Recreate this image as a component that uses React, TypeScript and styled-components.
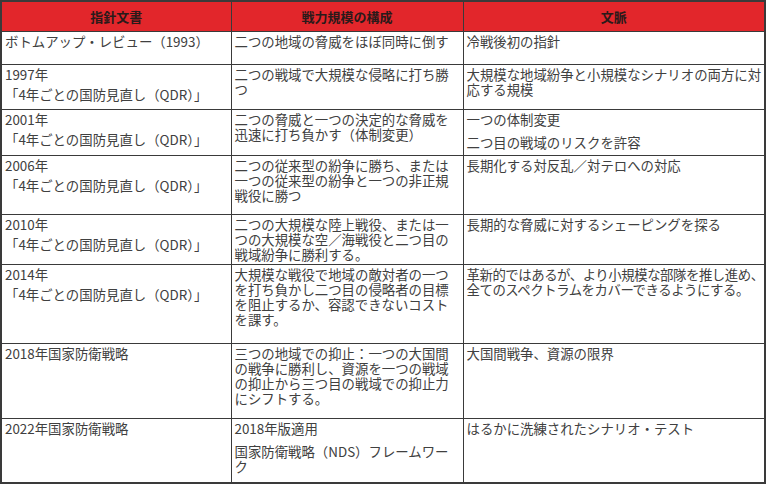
import styled, { createGlobalStyle } from 'styled-components'

interface Row {
  doc: string[]
  force: string[]
  context: string[]
  height: number
  tight?: boolean
}

// line breaks follow the source table
const rows: Row[] = [
  {
    doc: ['ボトムアップ・レビュー（1993）'],
    force: ['二つの地域の脅威をほぼ同時に倒す'],
    context: ['冷戦後初の指針'],
    height: 33,
  },
  {
    doc: ['1997年', '「4年ごとの国防見直し（QDR）」'],
    force: ['二つの戦域で大規模な侵略に打ち勝\nつ'],
    context: ['大規模な地域紛争と小規模なシナリオの両方に対\n応する規模'],
    height: 45,
  },
  {
    doc: ['2001年', '「4年ごとの国防見直し（QDR）」'],
    force: ['二つの脅威と一つの決定的な脅威を\n迅速に打ち負かす（体制変更）'],
    context: ['一つの体制変更', '二つ目の戦域のリスクを許容'],
    height: 46,
  },
  {
    doc: ['2006年', '「4年ごとの国防見直し（QDR）」'],
    force: ['二つの従来型の紛争に勝ち、または\n一つの従来型の紛争と一つの非正規\n戦役に勝つ'],
    context: ['長期化する対反乱／対テロへの対応'],
    height: 59,
  },
  {
    doc: ['2010年', '「4年ごとの国防見直し（QDR）」'],
    force: ['二つの大規模な陸上戦役、または一\nつの大規模な空／海戦役と二つ目の\n戦域紛争に勝利する。'],
    context: ['長期的な脅威に対するシェーピングを探る'],
    height: 49,
  },
  {
    doc: ['2014年', '「4年ごとの国防見直し（QDR）」'],
    force: ['大規模な戦役で地域の敵対者の一つ\nを打ち負かし二つ目の侵略者の目標\nを阻止するか、容認できないコスト\nを課す。'],
    context: ['革新的ではあるが、より小規模な部隊を推し進め、\n全てのスペクトラムをカバーできるようにする。'],
    height: 79,
    tight: true,
  },
  {
    doc: ['2018年国家防衛戦略'],
    force: ['三つの地域での抑止：一つの大国間\nの戦争に勝利し、資源を一つの戦域\nの抑止から三つ目の戦域での抑止力\nにシフトする。'],
    context: ['大国間戦争、資源の限界'],
    height: 75,
  },
  {
    doc: ['2022年国家防衛戦略'],
    force: ['2018年版適用', '国家防衛戦略（NDS）フレームワー\nク'],
    context: ['はるかに洗練されたシナリオ・テスト'],
    height: 64,
  },
]

const GlobalStyle = createGlobalStyle`
  html, body {
    margin: 0;
    padding: 0;
    background: #ffffff;
  }
  body {
    font-family: "Noto Sans CJK JP", "Noto Sans", sans-serif;
  }
`

export default function App() {
  return (
    <>
      <GlobalStyle />
      <Table>
        <colgroup>
          <col style={{ width: 230 }} />
          <col style={{ width: 232 }} />
          <col />
        </colgroup>
        <thead>
          <tr>
            <HeadCell>指針文書</HeadCell>
            <HeadCell>戦力規模の構成</HeadCell>
            <HeadCell>文脈</HeadCell>
          </tr>
        </thead>
        <tbody>
          {rows.map((row, i) => (
            <BodyRow key={i} $height={row.height}>
              <Cell $gap={5}>
                {row.doc.map((t, j) => (
                  <Para key={j}>{t}</Para>
                ))}
              </Cell>
              <Cell $gap={8}>
                {row.force.map((t, j) => (
                  <Para key={j}>{t}</Para>
                ))}
              </Cell>
              <Cell $gap={8}>
                {row.context.map((t, j) => (
                  <Para key={j} $tight={row.tight}>
                    {t}
                  </Para>
                ))}
              </Cell>
            </BodyRow>
          ))}
        </tbody>
      </Table>
    </>
  )
}

const Table = styled.table`
  width: 766px;
  table-layout: fixed;
  border-collapse: collapse;
  border: 2px solid #3a3a3a;
  color: #404040;
  font-size: 13.4px;
  line-height: 15px;
`

const HeadCell = styled.th`
  height: 29px;
  padding: 0 4px;
  background: #e2262b;
  color: #2a1a1a;
  font-weight: 700;
  font-size: 13px;
  line-height: 15px;
  text-align: center;
  vertical-align: middle;
  border: 1px solid #3a3a3a;
`

const BodyRow = styled.tr<{ $height: number }>`
  height: ${({ $height }) => $height}px;
`

const Cell = styled.td<{ $gap: number }>`
  padding: 2px 0 2px 3px;
  vertical-align: top;
  border: 1px solid #3a3a3a;

  & p + p {
    margin-top: ${({ $gap }) => $gap}px;
  }
`

const Para = styled.p<{ $tight?: boolean }>`
  margin: 0;
  white-space: pre;
  letter-spacing: ${({ $tight }) => ($tight ? '-0.45px' : 'normal')};
`
